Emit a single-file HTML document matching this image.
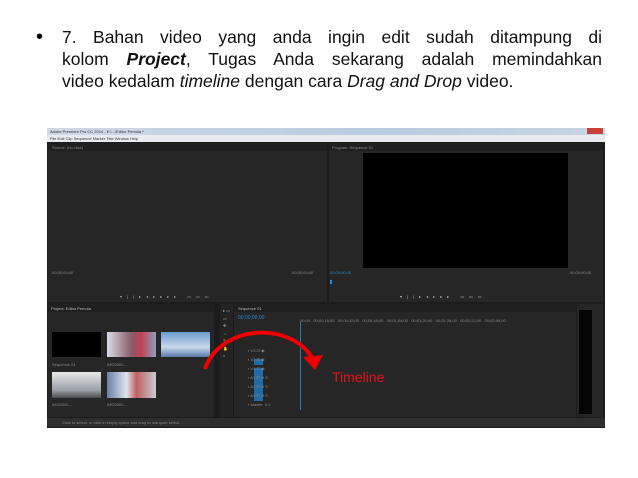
<!DOCTYPE html>
<html><head><style>
*{margin:0;padding:0;box-sizing:border-box}
body{width:638px;height:478px;background:#fff;position:relative;overflow:hidden;font-family:"Liberation Sans",sans-serif}
.t{position:absolute;left:62px;width:540px;font-size:17.5px;line-height:22px;color:#111;text-align:justify;text-align-last:justify}
.a{position:absolute}
.s{font-size:4px;color:#888;position:absolute;white-space:nowrap}
</style></head><body>
<div class="a" style="left:36px;top:26px;font-size:20px">•</div>
<div class="t" style="top:26px">7. Bahan video yang anda ingin edit sudah ditampung di</div>
<div class="t" style="top:48px">kolom <b><i>Project</i></b>, Tugas Anda sekarang adalah memindahkan</div>
<div class="t" style="top:70px;text-align-last:left">video kedalam <i>timeline</i> dengan cara <i>Drag and Drop</i> video.</div>

<div class="a" style="left:47px;top:128px;width:558px;height:300px;background:#1c1c1c"></div>
<div class="a" style="left:47px;top:128px;width:558px;height:7px;background:linear-gradient(90deg,#cfd9e6,#b9cbe0 60%,#c9d5e2)"></div>
<div class="a" style="left:47px;top:135px;width:558px;height:7px;background:#e8ecf1"></div>
<div class="s" style="left:50px;top:129px;color:#333">Adobe Premiere Pro CC 2014 - E:\...\Editor Pemula *</div>
<div class="s" style="left:50px;top:136px;color:#333">File Edit Clip Sequence Marker Title Window Help</div>
<div class="a" style="left:587px;top:128px;width:16px;height:6px;background:#c8413b"></div>
<div class="a" style="left:48px;top:143px;width:279px;height:159px;background:#262626"></div>
<div class="a" style="left:48px;top:143px;width:279px;height:8px;background:#202020"></div>
<div class="s" style="left:52px;top:145px">Source: (no clips)</div>
<div class="s" style="left:52px;top:270px">00;00;00;00</div>
<div class="s" style="left:292px;top:270px">00;00;00;00</div>
<div class="s" style="left:120px;top:294px;letter-spacing:5px;color:#aaa">▾||▸◂▸▸▸▸ ▭▭▭</div>
<div class="a" style="left:329px;top:143px;width:274px;height:159px;background:#262626"></div>
<div class="a" style="left:329px;top:143px;width:274px;height:8px;background:#202020"></div>
<div class="s" style="left:332px;top:145px">Program: Sequence 01</div>
<div class="a" style="left:363px;top:153px;width:205px;height:115px;background:#000"></div>
<div class="s" style="left:330px;top:270px;color:#2a8ad0">00;00;00;00</div>
<div class="s" style="left:570px;top:270px">00;00;00;00</div>
<div class="a" style="left:330px;top:280px;width:2px;height:4px;background:#2a8ad0"></div>
<div class="s" style="left:400px;top:294px;letter-spacing:5px;color:#bbb">▾||▸◂▸▸▸ ▭▭▭</div>
<div class="a" style="left:48px;top:304px;width:166px;height:113px;background:#262626"></div>
<div class="a" style="left:48px;top:304px;width:166px;height:8px;background:#202020"></div>
<div class="s" style="left:51px;top:306px;color:#bbb">Project: Editor Pemula</div>
<div class="a" style="left:52px;top:332px;width:49px;height:25px;background:#000"></div>
<div class="a" style="left:107px;top:332px;width:49px;height:25px;background:linear-gradient(90deg,#d9dde5,#8a5a6a 50%,#c04050 70%,#8aa0c0)"></div>
<div class="a" style="left:161px;top:332px;width:49px;height:25px;background:linear-gradient(180deg,#6a9ad0,#c8d8ec 60%,#5a7aa8)"></div>
<div class="a" style="left:52px;top:372px;width:49px;height:26px;background:linear-gradient(180deg,#e8e8e8,#9aa0a8 70%,#4a4a48)"></div>
<div class="a" style="left:107px;top:372px;width:49px;height:26px;background:linear-gradient(90deg,#6a7fa8,#e0e4ea 40%,#c06060 60%,#c8ccd0)"></div>
<div class="s" style="left:52px;top:362px">Sequence 01</div>
<div class="s" style="left:107px;top:362px">IMG0000...</div>
<div class="s" style="left:52px;top:402px">IMG0000...</div>
<div class="s" style="left:107px;top:402px">IMG0000...</div>
<div class="a" style="left:220px;top:304px;width:13px;height:113px;background:#232323"></div>
<div class="s" style="left:223px;top:307px;color:#aaa;line-height:7.5px;white-space:normal;width:8px">▸ ▭ ▭ ✥ ⇔ ✎ ✋ ⌕</div>
<div class="a" style="left:234px;top:304px;width:342px;height:113px;background:#262626"></div>
<div class="a" style="left:234px;top:304px;width:342px;height:8px;background:#202020"></div>
<div class="s" style="left:238px;top:306px;color:#bbb">Sequence 01</div>
<div class="s" style="left:238px;top:315px;color:#2a8ad0;font-size:5px">00;00;00;00</div>
<div class="s" style="left:300px;top:318px">00;00 &nbsp; 00;00;16;00 &nbsp; 00;00;32;00 &nbsp; 00;00;48;00 &nbsp; 00;01;04;00 &nbsp; 00;01;20;00 &nbsp; 00;01;36;00 &nbsp; 00;01;52;00 &nbsp; 00;02;08;00</div>
<div class="a" style="left:300px;top:322px;width:1px;height:88px;background:#2a7ab0"></div>
<div class="a" style="left:254px;top:359px;width:9px;height:6px;background:#1f6aa8"></div>
<div class="a" style="left:254px;top:368px;width:9px;height:33px;background:#1f6aa8"></div>
<div class="s" style="left:248px;top:346px;line-height:9px;white-space:pre">▪ V3 ⊡ ◉
▪ V2 ⊡ ◉
▪ V1 ⊡ ◉
▪ A1 ⊡ M S
▪ A2 ⊡ M S
▪ A3 ⊡ M S
▪ Master  0.0</div>
<div class="a" style="left:577px;top:304px;width:26px;height:113px;background:#262626"></div>
<div class="a" style="left:579px;top:310px;width:13px;height:104px;background:#050505"></div>
<div class="a" style="left:47px;top:418px;width:558px;height:9px;background:#2e2e2e"></div>
<div class="s" style="left:62px;top:420px">Click to select, or click in empty space and drag to marquee select.</div>
<svg class="a" style="left:195px;top:325px" width="140" height="50" viewBox="0 0 140 50">
<path d="M10 44 C25 0 95 -5 118 34" stroke="#e00" stroke-width="4" fill="none"/>
<path d="M108 32 L128 30 L120 45 Z" fill="#e00"/>
</svg>
<div class="a" style="left:332px;top:369px;font-size:14px;color:#e4141b">Timeline</div>
</body></html>
